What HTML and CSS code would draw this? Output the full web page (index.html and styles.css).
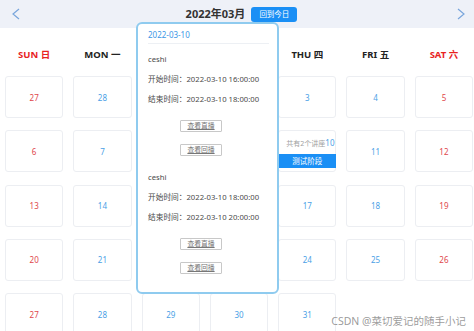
FILE: index.html
```html
<!DOCTYPE html>
<html lang="zh">
<head>
<meta charset="utf-8">
<link rel="stylesheet" href="styles.css">
</head>
<body>
<div class="page">
  <div class="header">
    <svg class="arrow" width="10" height="12" viewBox="0 0 10 12"><path d="M8 1 L2 6 L8 11" fill="none" stroke="#79a6dc" stroke-width="1.2"/></svg>
    <div class="title-group">
      <span class="title">2022年03月</span>
      <span class="today-btn">回到今日</span>
    </div>
    <svg class="arrow" width="10" height="12" viewBox="0 0 10 12"><path d="M2 1 L8 6 L2 11" fill="none" stroke="#79a6dc" stroke-width="1.2"/></svg>
  </div>

  <div class="weekdays">
    <div class="wd red">SUN 日</div>
    <div class="wd">MON 一</div>
    <div class="wd">TUE 二</div>
    <div class="wd">WED 三</div>
    <div class="wd">THU 四</div>
    <div class="wd">FRI 五</div>
    <div class="wd red">SAT 六</div>
  </div>

  <div class="days">
    <div class="cell"><span class="num red">27</span></div>
    <div class="cell"><span class="num">28</span></div>
    <div class="cell"><span class="num">1</span></div>
    <div class="cell"><span class="num">2</span></div>
    <div class="cell"><span class="num">3</span></div>
    <div class="cell"><span class="num">4</span></div>
    <div class="cell"><span class="num red">5</span></div>

    <div class="cell"><span class="num red">6</span></div>
    <div class="cell"><span class="num">7</span></div>
    <div class="cell"><span class="num">8</span></div>
    <div class="cell"><span class="num">9</span></div>
    <div class="cell cell-event">
      <div class="ev-top"><span class="ev-count">共有2个讲座</span><span class="num">10</span></div>
      <div class="ev-bar">测试阶段</div>
    </div>
    <div class="cell"><span class="num">11</span></div>
    <div class="cell"><span class="num red">12</span></div>

    <div class="cell"><span class="num red">13</span></div>
    <div class="cell"><span class="num">14</span></div>
    <div class="cell"><span class="num">15</span></div>
    <div class="cell"><span class="num">16</span></div>
    <div class="cell"><span class="num">17</span></div>
    <div class="cell"><span class="num">18</span></div>
    <div class="cell"><span class="num red">19</span></div>

    <div class="cell"><span class="num red">20</span></div>
    <div class="cell"><span class="num">21</span></div>
    <div class="cell"><span class="num">22</span></div>
    <div class="cell"><span class="num">23</span></div>
    <div class="cell"><span class="num">24</span></div>
    <div class="cell"><span class="num">25</span></div>
    <div class="cell"><span class="num red">26</span></div>

    <div class="cell"><span class="num red">27</span></div>
    <div class="cell"><span class="num">28</span></div>
    <div class="cell"><span class="num">29</span></div>
    <div class="cell"><span class="num">30</span></div>
    <div class="cell"><span class="num">31</span></div>
  </div>

  <div class="popover">
    <div class="pop-date">2022-03-10</div>
    <div class="event">
      <div class="line">ceshi</div>
      <div class="line">开始时间：2022-03-10 16:00:00</div>
      <div class="line">结束时间：2022-03-10 18:00:00</div>
      <span class="pbtn first">查看直播</span>
      <span class="pbtn">查看回播</span>
    </div>
    <div class="event">
      <div class="line">ceshi</div>
      <div class="line">开始时间：2022-03-10 18:00:00</div>
      <div class="line">结束时间：2022-03-10 20:00:00</div>
      <span class="pbtn first">查看直播</span>
      <span class="pbtn">查看回播</span>
    </div>
  </div>

  <div class="watermark">CSDN @菜切爱记的随手小记</div>
</div>
</body>
</html>
```

FILE: styles.css
```css
html, body {
  margin: 0;
  padding: 0;
  background: #fff;
}
body {
  width: 474px;
  height: 331px;
  overflow: hidden;
  font-family: "Noto Sans", "Noto Sans CJK SC", sans-serif;
}
.page {
  position: relative;
  width: 474px;
  height: 331px;
  overflow: hidden;
}
.header {
  height: 28px;
  background: #eef1f8;
  display: flex;
  align-items: center;
  justify-content: space-between;
  padding: 0 8px 0 11px;
}
.arrow {
  display: block;
}
.title-group {
  display: flex;
  align-items: center;
  gap: 6px;
  margin-left: 6px;
}
.title {
  font-size: 11px;
  font-weight: bold;
  color: #333;
  line-height: 14px;
}
.today-btn {
  display: block;
  width: 46px;
  height: 15px;
  line-height: 15px;
  text-align: center;
  background: #1a8ff5;
  color: #fff;
  font-size: 7.5px;
  border-radius: 3px;
}
.weekdays {
  display: grid;
  grid-template-columns: repeat(7, 68.3px);
  height: 48px;
  padding-top: 4px;
  box-sizing: border-box;
  align-items: center;
}
.wd {
  text-align: center;
  font-size: 9.5px;
  font-weight: bold;
  color: #222;
}
.wd.red {
  color: #e8231f;
}
.days {
  display: grid;
  grid-template-columns: repeat(7, 68.3px);
  grid-auto-rows: 42px;
  row-gap: 12.3px;
}
.cell {
  margin: 0 5px;
  border: 1px solid #eceef2;
  border-radius: 3px;
  display: flex;
  align-items: center;
  justify-content: center;
}
.num {
  font-size: 8px;
  color: #4a9fe6;
}
.num.red {
  color: #e0474c;
}
.cell-event {
  flex-direction: column;
  align-items: stretch;
  justify-content: flex-start;
  padding-top: 6px;
  box-sizing: border-box;
}
.ev-top {
  display: flex;
  justify-content: flex-end;
  align-items: baseline;
  padding-right: 1px;
  line-height: 12px;
}
.ev-count {
  font-size: 7px;
  color: #a0a0a0;
}
.ev-bar {
  margin: 4px -1px 0;
  height: 14px;
  line-height: 14px;
  background: #1a8ff5;
  color: #fff;
  font-size: 7.5px;
  text-align: center;
}
.popover {
  position: absolute;
  left: 136px;
  top: 22px;
  width: 143px;
  height: 272px;
  box-sizing: border-box;
  border: 2px solid #8fcbef;
  border-radius: 6px;
  background: #fff;
  padding: 4px 8px 0 10px;
}
.pop-date {
  font-size: 8px;
  color: #3d97e6;
  line-height: 14px;
  padding-bottom: 1px;
  border-bottom: 1px solid #edf0f4;
}
.event {
  display: flex;
  flex-direction: column;
  align-items: flex-start;
  margin-top: 5px;
}
.event + .event {
  margin-top: 11px;
}
.line {
  font-size: 7.7px;
  color: #4a4a4a;
  line-height: 20px;
  white-space: nowrap;
}
.pbtn {
  display: block;
  margin-left: 32px;
  width: 42px;
  height: 12px;
  box-sizing: border-box;
  border: 1px solid #c8c8c8;
  border-radius: 1px;
  font-size: 6.8px;
  line-height: 10px;
  text-align: center;
  color: #777;
  text-decoration: underline;
  margin-top: 12px;
}
.pbtn.first {
  margin-top: 11px;
}
.watermark {
  position: absolute;
  right: 8px;
  bottom: 3px;
  font-size: 10.5px;
  color: rgba(120, 120, 120, 0.75);
  white-space: nowrap;
}
```
